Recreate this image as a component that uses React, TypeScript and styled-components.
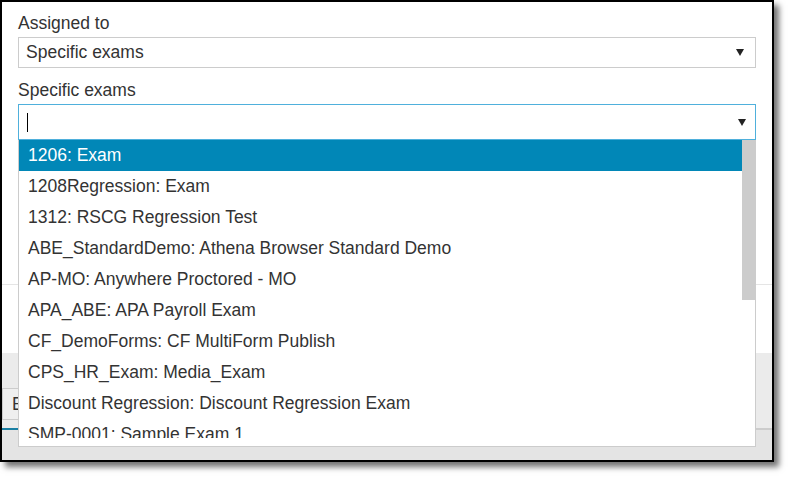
import React from 'react'
import styled, { createGlobalStyle } from 'styled-components'

const LookAndFeel = createGlobalStyle`
  html, body {
    margin: 0;
    padding: 0;
    background: #ffffff;
    font-family: "Liberation Sans", Arial, sans-serif;
    color: #333333;
  }
`

const Screen = styled.div`
  width: 789px;
  height: 478px;
  background: #ffffff;
`

const Frame = styled.div`
  position: relative;
  width: 770px;
  height: 458px;
  border: 2px solid #000000;
  box-shadow: 5px 5px 6px rgba(0, 0, 0, 0.55);
  display: flex;
  flex-direction: column;
  background: #ffffff;
`

const DialogBody = styled.div`
  height: 272px;
  padding: 10px 16px 0 16px;
  border-bottom: 1px solid #e5e5e5;
`

const DialogFooter = styled.div`
  height: 68px;
  background: #ffffff;
`

const PageArea = styled.div`
  height: 75px;
  background: #ebebeb;
  display: flex;
  align-items: flex-end;
  border-bottom: 2px solid #cccccc;
  position: relative;
`

const Tab = styled.div`
  height: 30px;
  width: 140px;
  margin-bottom: 8px;
  border: 1px solid #cccccc;
  background: #efefef;
  padding-left: 9px;
  font-size: 17.5px;
  line-height: 30px;
  color: #333333;
`

const TabIndicator = styled.div`
  position: absolute;
  left: 0;
  bottom: -2px;
  width: 150px;
  height: 2px;
  background: #1a7fa3;
`

const PageBottom = styled.div`
  flex: 1;
  background: #e4e4e4;
`

const Label = styled.div<{ $gap?: number }>`
  font-size: 17.5px;
  line-height: 22px;
  margin-top: ${(p) => p.$gap ?? 0}px;
  margin-bottom: 3px;
`

const Select = styled.div<{ $focused?: boolean }>`
  position: relative;
  height: ${(p) => (p.$focused ? 34 : 29)}px;
  border: 1px solid ${(p) => (p.$focused ? '#4fb0dc' : '#cccccc')};
  display: flex;
  align-items: center;
  padding: 0 7px;
  font-size: 17.5px;
  background: #ffffff;
`

const Value = styled.span`
  flex: 1;
`

const Caret = styled.span`
  width: 1px;
  height: 19px;
  background: #000000;
  margin-left: 1px;
`

const Spacer = styled.span`
  flex: 1;
`

const Arrow = styled.span<{ $shift?: number }>`
  width: 0;
  height: 0;
  border-left: 4px solid transparent;
  border-right: 4px solid transparent;
  border-top: 7px solid #222222;
  margin-right: ${(p) => p.$shift ?? 0}px;
`

const Dropdown = styled.div`
  position: absolute;
  top: calc(100% + 1px);
  left: -1px;
  right: -1px;
  height: 298px;
  padding-bottom: 8px;
  border: 1px solid #cccccc;
  border-top: none;
  background: #ffffff;
  z-index: 5;
`

const Viewport = styled.div`
  height: 100%;
  overflow: hidden;
  display: flex;
`

const List = styled.div`
  flex: 1;
`

const Option = styled.div<{ $active?: boolean }>`
  height: 31px;
  line-height: 31px;
  padding-left: 9px;
  font-size: 17.5px;
  white-space: nowrap;
  background: ${(p) => (p.$active ? '#0187b7' : '#ffffff')};
  color: ${(p) => (p.$active ? '#ffffff' : '#333333')};
`

const ScrollTrack = styled.div`
  width: 13px;
  background: #ffffff;
`

const ScrollThumb = styled.div`
  height: 160px;
  background: #cccccc;
`

const exams = [
  '1206: Exam',
  '1208Regression: Exam',
  '1312: RSCG Regression Test',
  'ABE_StandardDemo: Athena Browser Standard Demo',
  'AP-MO: Anywhere Proctored - MO',
  'APA_ABE: APA Payroll Exam',
  'CF_DemoForms: CF MultiForm Publish',
  'CPS_HR_Exam: Media_Exam',
  'Discount Regression: Discount Regression Exam',
  'SMP-0001: Sample Exam 1',
]

const App = () => {
  return (
    <Screen>
      <LookAndFeel />
      <Frame>
        <DialogBody>
          <Label>Assigned to</Label>
          <Select>
            <Value>Specific exams</Value>
            <Arrow $shift={4} />
          </Select>
          <Label $gap={11}>Specific exams</Label>
          <Select $focused>
            <Caret />
            <Spacer />
            <Arrow $shift={2} />
            <Dropdown>
              <Viewport>
                <List>
                  {exams.map((e, i) => (
                    <Option key={e} $active={i === 0}>{e}</Option>
                  ))}
                </List>
                <ScrollTrack>
                  <ScrollThumb />
                </ScrollTrack>
              </Viewport>
            </Dropdown>
          </Select>
        </DialogBody>
        <DialogFooter />
        <PageArea>
          <Tab>E</Tab>
          <TabIndicator />
        </PageArea>
        <PageBottom />
      </Frame>
    </Screen>
  )
}

export default App
